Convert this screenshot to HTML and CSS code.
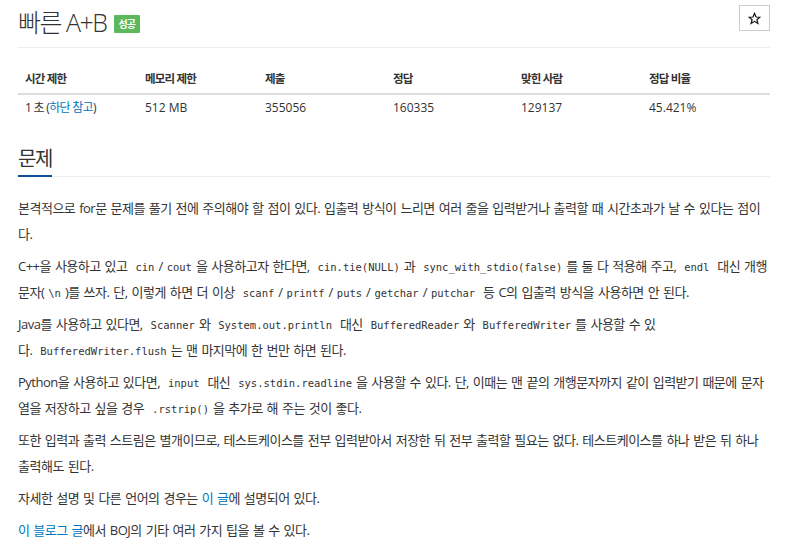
FILE: index.html
```html
<!DOCTYPE html>
<html lang="ko">
<head>
<meta charset="utf-8">
<link rel="stylesheet" href="styles.css">
</head>
<body>
<div class="container">
  <div class="page-header">
    <h1 class="title">빠른 A+B <span class="badge">성공</span></h1>
    <button class="star" type="button" aria-label="star">
      <svg width="13" height="13" viewBox="0 0 24 24"><polygon points="12,2.5 14.8,9.2 22,9.6 16.4,14.2 18.3,21.3 12,17.3 5.7,21.3 7.6,14.2 2,9.6 9.2,9.2" fill="none" stroke="#111" stroke-width="2.2" stroke-linejoin="miter"/></svg>
    </button>
  </div>
  <table class="info">
    <colgroup><col class="c1"><col class="c1"><col class="c2"><col class="c2"><col class="c2"><col class="c2"></colgroup>
    <thead>
      <tr><th>시간 제한</th><th>메모리 제한</th><th>제출</th><th>정답</th><th>맞힌 사람</th><th>정답 비율</th></tr>
    </thead>
    <tbody>
      <tr><td class="ko">1 초 (<a href="#">하단 참고</a>)</td><td>512 MB</td><td>355056</td><td>160335</td><td>129137</td><td>45.421%</td></tr>
    </tbody>
  </table>
  <h2 class="headline"><span>문제</span></h2>
  <div class="problem">
    <p>본격적으로 for문 문제를 풀기 전에 주의해야 할 점이 있다. 입출력 방식이 느리면 여러 줄을 입력받거나 출력할 때 시간초과가 날 수 있다는 점이다.</p>
    <p>C++을 사용하고 있고 <code>cin</code>/<code>cout</code>을 사용하고자 한다면, <code>cin.tie(NULL)</code>과 <code>sync_with_stdio(false)</code>를 둘 다 적용해 주고, <code>endl</code> 대신 개행문자(<code>\n</code>)를 쓰자. 단, 이렇게 하면 더 이상 <code>scanf</code>/<code>printf</code>/<code>puts</code>/<code>getchar</code>/<code>putchar</code> 등 C의 입출력 방식을 사용하면 안 된다.</p>
    <p>Java를 사용하고 있다면, <code>Scanner</code>와 <code>System.out.println</code> 대신 <code>BufferedReader</code>와 <code>BufferedWriter</code>를 사용할 수 있다.&nbsp;<code>BufferedWriter.flush</code>는 맨 마지막에 한 번만 하면 된다.</p>
    <p>Python을 사용하고 있다면, <code>input</code> 대신 <code>sys.stdin.readline</code>을 사용할 수 있다. 단, 이때는 맨 끝의 개행문자까지 같이 입력받기 때문에 문자열을 저장하고 싶을 경우 <code>.rstrip()</code>을 추가로 해 주는 것이 좋다.</p>
    <p>또한 입력과 출력 스트림은 별개이므로, 테스트케이스를 전부 입력받아서 저장한 뒤 전부 출력할 필요는 없다. 테스트케이스를 하나 받은 뒤 하나 출력해도 된다.</p>
    <p>자세한 설명 및 다른 언어의 경우는 <a href="#">이 글</a>에 설명되어 있다.</p>
    <p><a href="#">이 블로그 글</a>에서 BOJ의 기타 여러 가지 팁을 볼 수 있다.</p>
  </div>
</div>
</body>
</html>
```
FILE: styles.css
```css
html, body {
  margin: 0;
  padding: 0;
  background: #fff;
}
body {
  font-family: "Open Sans", "Noto Sans CJK KR", sans-serif;
  color: #333;
  font-size: 14px;
}
a {
  color: #0076c0;
  text-decoration: none;
}
.container {
  width: 752px;
  margin-left: 18px;
}
.page-header {
  display: flex;
  justify-content: space-between;
  align-items: flex-start;
  border-bottom: 1px solid #eee;
  padding-top: 5px;
  height: 48px;
  box-sizing: border-box;
}
.title {
  margin: 0;
  font-size: 25px;
  font-weight: 300;
  line-height: 34px;
  letter-spacing: -1.5px;
  display: flex;
  align-items: center;
  gap: 8px;
}
.badge {
  display: inline-block;
  background: #5cb85c;
  color: #fff;
  font-size: 10px;
  font-weight: 700;
  line-height: 18px;
  letter-spacing: -0.8px;
  padding: 0 5px 0 4px;
  border-radius: 1px;
  margin-top: 4px;
}
.star {
  width: 31px;
  height: 26px;
  border: 1px solid #ccc;
  background: #fff;
  padding: 0;
  display: flex;
  align-items: center;
  justify-content: center;
}
.star svg {
  display: block;
}
.info {
  width: 752px;
  table-layout: fixed;
  border-collapse: collapse;
  margin-top: 16px;
  font-size: 12px;
}
.info .c1 { width: 120px; }
.info .c2 { width: 128px; }
.info th, .info td {
  text-align: left;
  padding: 7px 7px 6px;
  line-height: 16px;
}
.info th {
  font-weight: 700;
  font-size: 11.5px;
  letter-spacing: -0.8px;
  border-bottom: 2px solid #ddd;
}
.info td {
  padding-top: 5px;
  padding-bottom: 7px;
}
.info td.ko {
  letter-spacing: -0.7px;
}
.headline {
  margin: 22px 0 0;
  font-size: 20px;
  font-weight: 400;
  border-bottom: 1px solid #eee;
  line-height: 28px;
  letter-spacing: -1.5px;
}
.headline span {
  display: inline-block;
  border-bottom: 2px solid #0e4f97;
  margin-bottom: -1px;
  padding-bottom: 2px;
}
.problem {
  margin-top: 18px;
  font-size: 13px;
  line-height: 26px;
  letter-spacing: -0.5px;
  word-spacing: 1px;
}
.problem p {
  margin: 0 0 6px;
}
code {
  font-family: "DejaVu Sans Mono", monospace;
  font-size: 10.5px;
  line-height: 1;
  letter-spacing: 0;
  word-spacing: 0;
  padding: 2px 4px;
}
```
